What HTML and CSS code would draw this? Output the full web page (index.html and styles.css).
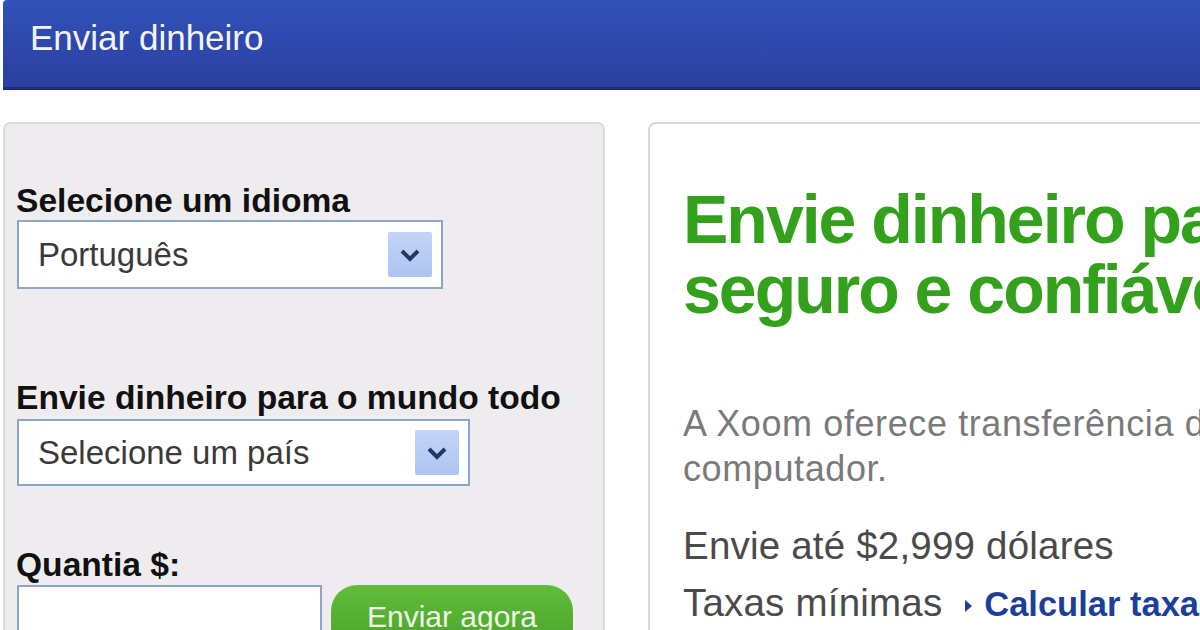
FILE: index.html
```html
<!DOCTYPE html>
<html>
<head>
  <meta charset="UTF-8">
  <meta name="viewport" content="width=device-width, initial-scale=1.0">
  <title>Enviar dinheiro</title>
  <link rel="stylesheet" href="styles.css">
</head>
<body>
  <div class="topbar">Enviar dinheiro</div>

  <div class="main">
    <div class="send-box">
      <div class="label">Selecione um idioma</div>
      <div class="dropdown lang">
        <span>Português</span>
        <span class="arrow"><svg width="22" height="14" viewBox="0 0 22 14"><path d="M3 3 L11 11 L19 3" fill="none" stroke="#24375f" stroke-width="4"/></svg></span>
      </div>

      <div class="label second">Envie dinheiro para o mundo todo</div>
      <div class="dropdown country">
        <span>Selecione um país</span>
        <span class="arrow"><svg width="22" height="14" viewBox="0 0 22 14"><path d="M3 3 L11 11 L19 3" fill="none" stroke="#24375f" stroke-width="4"/></svg></span>
      </div>

      <div class="label third">Quantia $:</div>
      <div class="amount-row">
        <input type="text" class="amount">
        <button class="send-btn">Enviar agora</button>
      </div>
    </div>

    <div class="info-box">
      <h1>Envie dinheiro para o exterior<br>seguro e confiável</h1>
      <p class="intro">A Xoom oferece transferência de dinheiro do seu<br>computador.</p>
      <p class="facts">
        Envie até $2,999 dólares<br>
        Taxas mínimas <a href="#" class="calc"><span class="tri"></span>Calcular taxas</a>
      </p>
    </div>
  </div>
</body>
</html>
```

FILE: styles.css
```css
body {
  margin: 0;
  background: #fff;
  font-family: "Liberation Sans", Arial, sans-serif;
  overflow: hidden;
}
.topbar {
  margin-left: 3px;
  height: 87px;
  padding-left: 27px;
  line-height: 76px;
  font-size: 35px;
  color: #f2f4fb;
  background: linear-gradient(#3252b9, #2a3f9f);
  border-bottom: 3px solid #1b2a7a;
  border-top-left-radius: 4px;
  white-space: nowrap;
}
.main {
  display: flex;
  gap: 43px;
  padding: 32px 0 0 3px;
  width: 1500px;
}
.send-box {
  width: 602px;
  height: 560px;
  flex-shrink: 0;
  background: #efecf0;
  border: 2px solid #dcdadd;
  border-radius: 7px;
  padding: 59px 0 0 11px;
  box-sizing: border-box;
}
.label {
  font-size: 33.6px;
  font-weight: bold;
  line-height: 36px;
  color: #111;
  margin-bottom: 1px;
  white-space: nowrap;
}
.label.second {
  margin-top: 91px;
  margin-bottom: 3px;
}
.label.third {
  margin-top: 61px;
  margin-bottom: 2px;
}
.dropdown {
  display: flex;
  align-items: center;
  justify-content: space-between;
  height: 67px;
  margin-left: 1px;
  padding: 0 9px 0 19px;
  box-sizing: border-box;
  background: #fff;
  border: 2px solid #8fa7c7;
  font-size: 33px;
  color: #3a3a3a;
}
.dropdown.lang {
  width: 426px;
  height: 69px;
}
.dropdown.country {
  width: 453px;
}
.arrow {
  display: flex;
  align-items: center;
  justify-content: center;
  width: 44px;
  height: 45px;
  background: linear-gradient(#c3d4f7, #aec4f2);
  border-radius: 2px;
}
.amount-row {
  display: flex;
  gap: 9px;
  margin-left: 1px;
}
.amount {
  width: 305px;
  height: 70px;
  box-sizing: border-box;
  border: 2px solid #8fa7c7;
  background: #fff;
}
.send-btn {
  width: 242px;
  height: 70px;
  border: none;
  border-radius: 26px;
  background: linear-gradient(#62bd3c, #46a128);
  color: #eef8e8;
  font-family: "Liberation Sans", Arial, sans-serif;
  font-size: 30px;
  padding: 0 0 6px;
}
.info-box {
  width: 800px;
  height: 560px;
  flex-shrink: 0;
  background: #fff;
  border: 2px solid #d9d9d9;
  border-radius: 8px;
  padding: 60px 0 0 33px;
  box-sizing: border-box;
}
.info-box h1 {
  margin: 0;
  font-size: 68px;
  line-height: 70px;
  letter-spacing: -2px;
  color: #34a11d;
  white-space: nowrap;
}
.intro {
  margin: 77px 0 0;
  font-size: 36px;
  line-height: 45px;
  letter-spacing: 0.6px;
  color: #7a7a7a;
  white-space: nowrap;
}
.facts {
  margin: 26px 0 0;
  font-size: 38.5px;
  line-height: 57px;
  letter-spacing: 0.2px;
  color: #4a4a4a;
  white-space: nowrap;
}
.calc {
  margin-left: 12px;
  font-size: 34.5px;
  font-weight: bold;
  letter-spacing: 0;
  color: #1d3f9c;
  text-decoration: none;
}
.tri {
  display: inline-block;
  width: 0;
  height: 0;
  border-top: 6px solid transparent;
  border-bottom: 6px solid transparent;
  border-left: 7px solid #1d3f9c;
  margin-right: 12px;
  vertical-align: 4px;
}
```
